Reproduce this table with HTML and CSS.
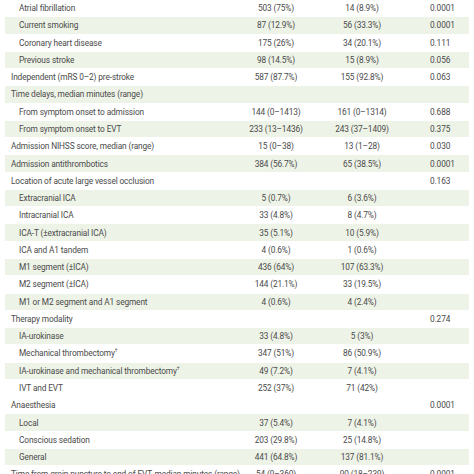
FILE: index.html
```html
<!DOCTYPE html>
<html>
<head>
<meta charset="utf-8">
<link rel="stylesheet" href="styles.css">
</head>
<body>
<div class="table">
  <div class="row"><div class="lbl sub">Atrial fibrillation</div><div class="v">503 (75%)</div><div class="v">14 (8.9%)</div><div class="p">0.0001</div></div>
  <div class="row s"><div class="lbl sub">Current smoking</div><div class="v">87 (12.9%)</div><div class="v">56 (33.3%)</div><div class="p">0.0001</div></div>
  <div class="row"><div class="lbl sub">Coronary heart disease</div><div class="v">175 (26%)</div><div class="v">34 (20.1%)</div><div class="p">0.111</div></div>
  <div class="row s"><div class="lbl sub">Previous stroke</div><div class="v">98 (14.5%)</div><div class="v">15 (8.9%)</div><div class="p">0.056</div></div>
  <div class="row"><div class="lbl">Independent (mRS 0–2) pre-stroke</div><div class="v">587 (87.7%)</div><div class="v">155 (92.8%)</div><div class="p">0.063</div></div>
  <div class="row s"><div class="lbl">Time delays, median minutes (range)</div><div class="v"></div><div class="v"></div><div class="p"></div></div>
  <div class="row"><div class="lbl sub">From symptom onset to admission</div><div class="v">144 (0–1413)</div><div class="v">161 (0–1314)</div><div class="p">0.688</div></div>
  <div class="row s"><div class="lbl sub">From symptom onset to EVT</div><div class="v">233 (13–1436)</div><div class="v">243 (37–1409)</div><div class="p">0.375</div></div>
  <div class="row"><div class="lbl">Admission NIHSS score, median (range)</div><div class="v">15 (0–38)</div><div class="v">13 (1–28)</div><div class="p">0.030</div></div>
  <div class="row s"><div class="lbl">Admission antithrombotics</div><div class="v">384 (56.7%)</div><div class="v">65 (38.5%)</div><div class="p">0.0001</div></div>
  <div class="row"><div class="lbl">Location of acute large vessel occlusion</div><div class="v"></div><div class="v"></div><div class="p">0.163</div></div>
  <div class="row s"><div class="lbl sub">Extracranial ICA</div><div class="v">5 (0.7%)</div><div class="v">6 (3.6%)</div><div class="p"></div></div>
  <div class="row"><div class="lbl sub">Intracranial ICA</div><div class="v">33 (4.8%)</div><div class="v">8 (4.7%)</div><div class="p"></div></div>
  <div class="row s"><div class="lbl sub">ICA-T (±extracranial ICA)</div><div class="v">35 (5.1%)</div><div class="v">10 (5.9%)</div><div class="p"></div></div>
  <div class="row"><div class="lbl sub">ICA and A1 tandem</div><div class="v">4 (0.6%)</div><div class="v">1 (0.6%)</div><div class="p"></div></div>
  <div class="row s"><div class="lbl sub">M1 segment (±ICA)</div><div class="v">436 (64%)</div><div class="v">107 (63.3%)</div><div class="p"></div></div>
  <div class="row"><div class="lbl sub">M2 segment (±ICA)</div><div class="v">144 (21.1%)</div><div class="v">33 (19.5%)</div><div class="p"></div></div>
  <div class="row s"><div class="lbl sub">M1 or M2 segment and A1 segment</div><div class="v">4 (0.6%)</div><div class="v">4 (2.4%)</div><div class="p"></div></div>
  <div class="row"><div class="lbl">Therapy modality</div><div class="v"></div><div class="v"></div><div class="p">0.274</div></div>
  <div class="row s"><div class="lbl sub">IA-urokinase</div><div class="v">33 (4.8%)</div><div class="v">5 (3%)</div><div class="p"></div></div>
  <div class="row"><div class="lbl sub">Mechanical thrombectomy<sup>†</sup></div><div class="v">347 (51%)</div><div class="v">86 (50.9%)</div><div class="p"></div></div>
  <div class="row s"><div class="lbl sub">IA-urokinase and mechanical thrombectomy<sup>†</sup></div><div class="v">49 (7.2%)</div><div class="v">7 (4.1%)</div><div class="p"></div></div>
  <div class="row"><div class="lbl sub">IVT and EVT</div><div class="v">252 (37%)</div><div class="v">71 (42%)</div><div class="p"></div></div>
  <div class="row"><div class="lbl">Anaesthesia</div><div class="v"></div><div class="v"></div><div class="p">0.0001</div></div>
  <div class="row s"><div class="lbl sub">Local</div><div class="v">37 (5.4%)</div><div class="v">7 (4.1%)</div><div class="p"></div></div>
  <div class="row"><div class="lbl sub">Conscious sedation</div><div class="v">203 (29.8%)</div><div class="v">25 (14.8%)</div><div class="p"></div></div>
  <div class="row s"><div class="lbl sub">General</div><div class="v">441 (64.8%)</div><div class="v">137 (81.1%)</div><div class="p"></div></div>
  <div class="row"><div class="lbl">Time from groin puncture to end of EVT, median minutes (range)</div><div class="v">54 (9–360)</div><div class="v">90 (18–239)</div><div class="p">0.0001</div></div>
</div>
</body>
</html>
```

FILE: styles.css
```css
html, body {
  margin: 0;
  padding: 0;
  background: #ffffff;
  overflow: hidden;
}
body {
  width: 474px;
  height: 474px;
  font-family: Roboto, "Liberation Sans", sans-serif;
  font-size: 8.3px;
  letter-spacing: -0.12px;
  color: #4a4a4a;
}
.table {
  margin: 0 5px;
  width: 464px;
  display: flex;
  flex-direction: column;
  gap: 1px;
}
.row {
  display: grid;
  grid-template-columns: 233px 76px 96px 59px;
  height: 16.28px;
  align-items: center;
}
.row.s {
  background: #eef3e7;
}
.lbl {
  padding-left: 6px;
  white-space: nowrap;
}
.lbl.sub {
  padding-left: 14px;
}
.v {
  text-align: center;
  white-space: nowrap;
}
.p {
  padding-left: 20px;
  white-space: nowrap;
}
sup {
  font-size: 5px;
  vertical-align: top;
  line-height: 1;
}
```
